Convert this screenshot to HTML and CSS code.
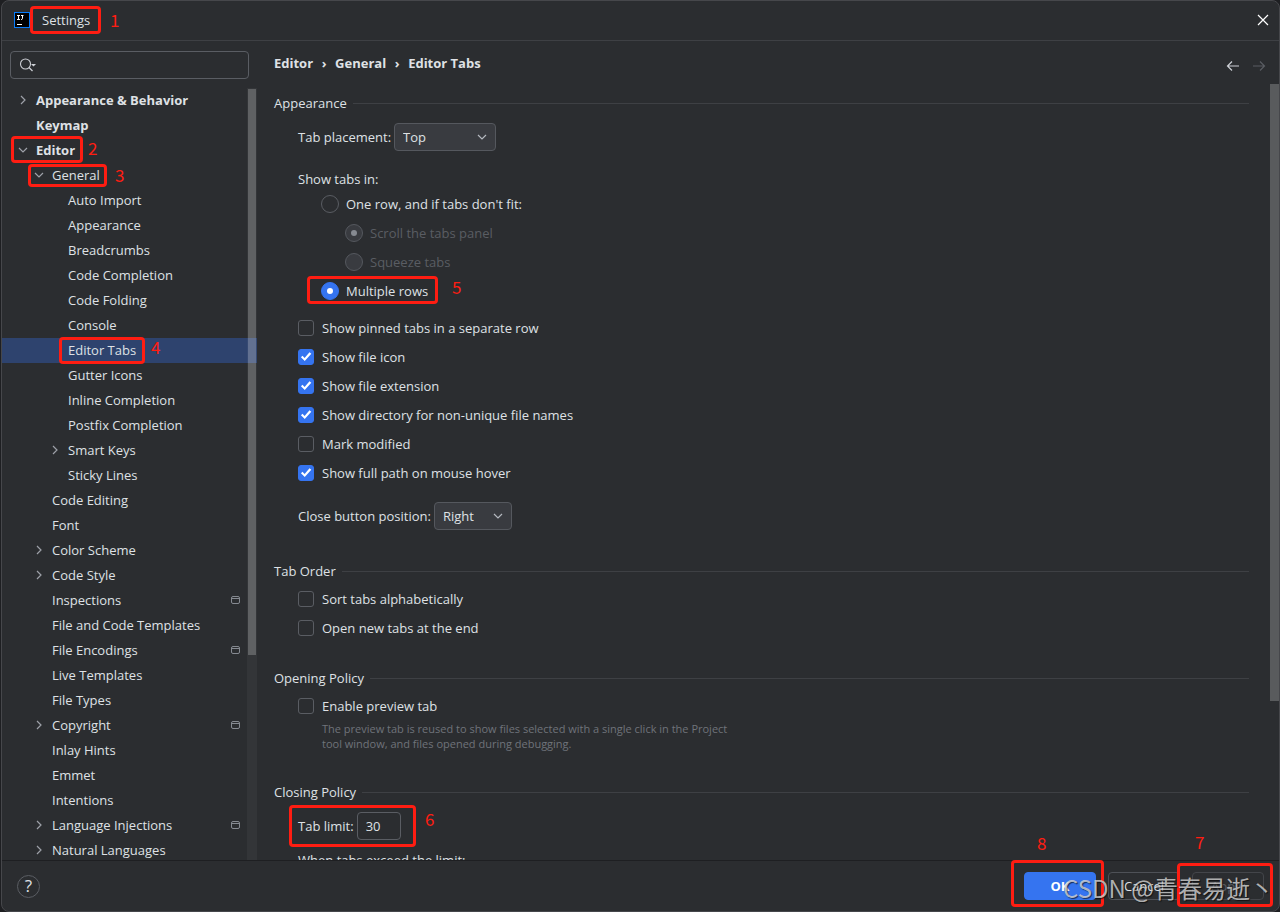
FILE: index.html
```html
<!DOCTYPE html>
<html lang="en">
<head>
  <meta charset="UTF-8">
  <meta name="viewport" content="width=device-width, initial-scale=1.0">
  <title>Settings</title>
  <link rel="stylesheet" href="styles.css">
</head>
<body>
  <!-- shared icons -->
  <svg class="defs" width="0" height="0">
    <symbol id="right" viewBox="0 0 16 16"><path d="M6 4l4 4-4 4" fill="none" stroke="currentColor" stroke-width="1.2"/></symbol>
    <symbol id="down" viewBox="0 0 16 16"><path d="M4 6l4 4 4-4" fill="none" stroke="currentColor" stroke-width="1.2"/></symbol>
    <symbol id="project" viewBox="0 0 16 16"><rect x="4.5" y="4.5" width="8" height="7" rx="1.5" fill="none" stroke="currentColor"/><path d="M4.5 6.5h8" stroke="currentColor"/></symbol>
  </svg>

  <div class="dialog">
    <header class="titlebar">
      <svg class="logo" width="16" height="16" viewBox="0 0 16 16">
        <rect x="0.5" y="0.5" width="15" height="15" fill="#000" stroke="#087cfa"/>
        <path d="M3 3.5h3M4.5 3.5v4M3 7.5h3M7 3.5h2.5M8.5 3.5v3q0 1-1.5 1M3 12.5h5" fill="none" stroke="#fff"/>
      </svg>
      <div class="title">Settings
        <span class="mark mark-title"></span><span class="num num-title">1</span>
      </div>
      <button class="close" aria-label="Close">
        <svg width="12" height="12" viewBox="0 0 12 12"><path d="M1 1l10 10M11 1L1 11" stroke="#fff" stroke-width="1.2"/></svg>
      </button>
    </header>

    <div class="body">
      <aside class="sidebar">
        <div class="search">
          <svg width="20" height="16" viewBox="0 0 20 16">
            <circle cx="6.5" cy="7" r="5" fill="none" stroke="#ced0d6" stroke-width="1.1"/>
            <path d="M10 10.5L13.5 14" stroke="#ced0d6" stroke-width="1.2"/>
            <path d="M12 7h5L14.5 9.5z" fill="#ced0d6"/>
          </svg>
          <input type="text" aria-label="Search settings">
        </div>
        <nav class="tree">
          <ul>
            <li class="top"><svg><use href="#right"/></svg><a href="#">Appearance &amp; Behavior</a></li>
            <li class="top"><a href="#">Keymap</a></li>
            <li class="top"><svg><use href="#down"/></svg><a href="#">Editor</a><span class="mark mark-editor"></span><span class="num num-editor">2</span></li>
            <li class="sub"><svg><use href="#down"/></svg><a href="#">General</a><span class="mark mark-general"></span><span class="num num-general">3</span></li>
            <li class="leaf"><a href="#">Auto Import</a></li>
            <li class="leaf"><a href="#">Appearance</a></li>
            <li class="leaf"><a href="#">Breadcrumbs</a></li>
            <li class="leaf"><a href="#">Code Completion</a></li>
            <li class="leaf"><a href="#">Code Folding</a></li>
            <li class="leaf"><a href="#">Console</a></li>
            <li class="leaf selected"><a href="#">Editor Tabs</a><span class="mark mark-tabs"></span><span class="num num-tabs">4</span></li>
            <li class="leaf"><a href="#">Gutter Icons</a></li>
            <li class="leaf"><a href="#">Inline Completion</a></li>
            <li class="leaf"><a href="#">Postfix Completion</a></li>
            <li class="leaf"><svg><use href="#right"/></svg><a href="#">Smart Keys</a></li>
            <li class="leaf"><a href="#">Sticky Lines</a></li>
            <li class="sub"><a href="#">Code Editing</a></li>
            <li class="sub"><a href="#">Font</a></li>
            <li class="sub"><svg><use href="#right"/></svg><a href="#">Color Scheme</a></li>
            <li class="sub"><svg><use href="#right"/></svg><a href="#">Code Style</a></li>
            <li class="sub"><a href="#">Inspections</a><svg class="project"><use href="#project"/></svg></li>
            <li class="sub"><a href="#">File and Code Templates</a></li>
            <li class="sub"><a href="#">File Encodings</a><svg class="project"><use href="#project"/></svg></li>
            <li class="sub"><a href="#">Live Templates</a></li>
            <li class="sub"><a href="#">File Types</a></li>
            <li class="sub"><svg><use href="#right"/></svg><a href="#">Copyright</a><svg class="project"><use href="#project"/></svg></li>
            <li class="sub"><a href="#">Inlay Hints</a></li>
            <li class="sub"><a href="#">Emmet</a></li>
            <li class="sub"><a href="#">Intentions</a></li>
            <li class="sub"><svg><use href="#right"/></svg><a href="#">Language Injections</a><svg class="project"><use href="#project"/></svg></li>
            <li class="sub"><svg><use href="#right"/></svg><a href="#">Natural Languages</a></li>
          </ul>
          <div class="track"><div class="thumb"></div></div>
        </nav>
      </aside>

      <main class="main">
        <div class="crumbs">
          <a href="#">Editor</a><span>›</span><a href="#">General</a><span>›</span><a href="#">Editor Tabs</a>
          <div class="history">
            <button aria-label="Back"><svg width="14" height="12" viewBox="0 0 14 12"><path d="M13 6H1.5M6 1.5L1.5 6 6 10.5" fill="none" stroke="#ced0d6" stroke-width="1.2"/></svg></button>
            <button aria-label="Forward" disabled><svg width="14" height="12" viewBox="0 0 14 12"><path d="M1 6h11.5M8 1.5L12.5 6 8 10.5" fill="none" stroke="#5a5d63" stroke-width="1.2"/></svg></button>
          </div>
        </div>

        <div class="scroll">
          <form class="form">
            <section>
              <h2>Appearance</h2>
              <div class="field">
                <label for="placement">Tab placement:</label>
                <div class="select placement">
                  <select id="placement"><option>Top</option><option>Bottom</option><option>Left</option><option>Right</option></select>
                  <svg><use href="#down"/></svg>
                </div>
              </div>
              <div class="caption">Show tabs in:</div>
              <div class="rows">
                <label class="row"><input type="radio" name="rows">One row, and if tabs don't fit:</label>
                <div class="nested">
                  <label class="row off"><input type="radio" name="fit" checked disabled>Scroll the tabs panel</label>
                  <label class="row off"><input type="radio" name="fit" disabled>Squeeze tabs</label>
                </div>
                <label class="row"><input type="radio" name="rows" checked>Multiple rows<span class="mark mark-rows"></span><span class="num num-rows">5</span></label>
              </div>
              <div class="checks">
                <label class="row"><input type="checkbox">Show pinned tabs in a separate row</label>
                <label class="row"><input type="checkbox" checked>Show file icon</label>
                <label class="row"><input type="checkbox" checked>Show file extension</label>
                <label class="row"><input type="checkbox" checked>Show directory for non-unique file names</label>
                <label class="row"><input type="checkbox">Mark modified</label>
                <label class="row"><input type="checkbox" checked>Show full path on mouse hover</label>
              </div>
              <div class="field position">
                <label for="position">Close button position:</label>
                <div class="select">
                  <select id="position"><option>Right</option><option>Left</option><option>None</option></select>
                  <svg><use href="#down"/></svg>
                </div>
              </div>
            </section>

            <section class="order">
              <h2>Tab Order</h2>
              <label class="row"><input type="checkbox">Sort tabs alphabetically</label>
              <label class="row"><input type="checkbox">Open new tabs at the end</label>
            </section>

            <section class="opening">
              <h2>Opening Policy</h2>
              <label class="row"><input type="checkbox">Enable preview tab</label>
              <p class="hint">The preview tab is reused to show files selected with a single click in the Project tool window, and files opened during debugging.</p>
            </section>

            <section class="closing">
              <h2>Closing Policy</h2>
              <div class="field">
                <label for="limit">Tab limit:</label>
                <input type="text" id="limit" value="30">
                <span class="mark mark-limit"></span><span class="num num-limit">6</span>
              </div>
              <div class="exceed">When tabs exceed the limit:</div>
            </section>
          </form>
          <div class="thumb"></div>
        </div>
      </main>
    </div>

    <footer class="footer">
      <button class="help" aria-label="Help">?</button>
      <div class="buttons">
        <div class="slot"><button class="btn ok">OK</button><span class="mark mark-ok"></span><span class="num num-ok">8</span></div>
        <div class="slot"><button class="btn">Cancel</button></div>
        <div class="slot"><button class="btn" disabled>Apply</button><span class="mark mark-apply"></span><span class="num num-apply">7</span></div>
      </div>
      <div class="watermark">CSDN @青春易逝丶</div>
    </footer>
  </div>
</body>
</html>
```
FILE: styles.css
```css
*{margin: 0;padding: 0;box-sizing: border-box;}
body{
  background: #1e1f22;
  color: #dfe1e5;
  font: 13px/20px "Open Sans", "Noto Sans CJK SC", sans-serif;
}
a{color: inherit;text-decoration: none;}
ul{list-style: none;}
button, input, select{font: inherit;color: inherit;}
button{background: none;border: none;}
svg{display: block;flex: none;}
.defs{position: absolute;}

.dialog{
  display: flex;
  flex-direction: column;
  height: 100vh;
  margin-left: 1px;
  border: 1px solid #46474b;
  border-radius: 8px;
  background: #2b2d30;
  overflow: hidden;
}

/* title bar */
.titlebar{
  display: flex;
  align-items: center;
  flex: none;
  height: 40px;
  padding: 0 10px 2px 12px;
  border-bottom: 1px solid #3e4044;
}
.title{position: relative;margin-left: 12px;}
.close{margin-left: auto;}

.body{display: flex;flex: 1;min-height: 0;}

/* sidebar */
.sidebar{
  display: flex;
  flex-direction: column;
  flex: none;
  width: 255px;
  padding-top: 10px;
}
.search{
  display: flex;
  align-items: center;
  flex: none;
  height: 28px;
  margin: 0 8px 9px;
  padding-left: 8px;
  border: 1px solid #5a5d63;
  border-radius: 4px;
}
.search input{
  flex: 1;
  min-width: 0;
  border: none;
  outline: none;
  background: none;
}
.tree{position: relative;flex: 1;min-height: 0;overflow: hidden;}
.tree li{
  position: relative;
  display: flex;
  align-items: center;
  height: 25px;
  padding-bottom: 1px;
}
.tree svg{width: 16px;height: 16px;margin: 0 5px 0 -21px;color: #9da0a8;}
.tree .project{margin: 0 14px 0 auto;color: #868a91;}
.top{padding-left: 34px;font-weight: bold;}
.sub{padding-left: 50px;}
.leaf{padding-left: 66px;}
.selected{background: #2e436e;}
.track{
  position: absolute;
  top: 0;
  right: 0;
  bottom: 0;
  width: 10px;
  padding: 1px;
  background: rgba(255, 255, 255, 0.04);
}
.thumb{background: rgba(255, 255, 255, 0.22);}
.track .thumb{height: 73.5%;}

/* right side */
.main{
  display: flex;
  flex-direction: column;
  flex: 1;
  min-width: 0;
}
.crumbs{
  display: flex;
  align-items: center;
  flex: none;
  height: 43px;
  padding: 0 13px 0 17px;
  font-weight: bold;
}
.crumbs span{width: 22px;text-align: center;}
.history{display: flex;gap: 12px;margin-left: auto;padding-top: 6px;}
.scroll{position: relative;flex: 1;min-height: 0;overflow: hidden;}
.scroll > .thumb{
  position: absolute;
  top: 0;
  right: 0;
  width: 9px;
  height: 79.5%;
}
.form{padding: 9px 30px 0 17px;}
h2{
  display: flex;
  align-items: center;
  gap: 6px;
  font-size: 13px;
  font-weight: normal;
}
h2::after{content: "";flex: 1;height: 1px;background: #3e4044;}
.field{
  position: relative;
  display: flex;
  align-items: center;
  gap: 3px;
  width: max-content;
  margin: 10px 0 0 24px;
}
.select{position: relative;width: 78px;}
.placement{width: 102px;}
.select select{
  appearance: none;
  display: block;
  width: 100%;
  height: 28px;
  padding: 0 8px;
  border: 1px solid #55585e;
  border-radius: 4px;
  background: #393b40;
}
.select svg{
  position: absolute;
  top: 6px;
  right: 6px;
  width: 16px;
  height: 16px;
  color: #b4b8bf;
  pointer-events: none;
}
.caption{margin: 18px 0 0 24px;}
.rows{margin-left: 48px;}
.nested{margin-left: 24px;}
.checks{margin: 8px 0 0 24px;}
.position{margin-top: 15px;}
.row{
  position: relative;
  display: flex;
  align-items: center;
  gap: 8px;
  width: max-content;
  height: 29px;
}
.off{color: #5a5d63;}
.row input{
  appearance: none;
  display: grid;
  place-items: center;
  width: 16px;
  height: 16px;
  border: 1px solid #5a5d63;
  border-radius: 3px;
}
.row input[type=radio]{
  width: 18px;
  height: 18px;
  margin: 0 -1px;
  border-radius: 50%;
}
.row input:checked{border-color: #3574f0;background: #3574f0;}
.row input[type=checkbox]:checked::before{
  content: "";
  width: 14px;
  height: 14px;
  background: #fff;
  clip-path: polygon(14% 56%, 25% 45%, 40% 61%, 75% 19%, 88% 30%, 41% 83%);
}
.row input[type=radio]:checked::before{
  content: "";
  width: 6px;
  height: 6px;
  border-radius: 50%;
  background: #fff;
}
.row input:disabled{border-color: #55585e;background: #393b40;}
.row input[type=radio]:disabled::before{background: #868a91;}
.order{margin-top: 31px;}
.opening{margin-top: 26px;}
.closing{margin-top: 31px;}
section > .row{margin-left: 24px;}
h2 + .row{margin-top: 3px;}
.hint{
  max-width: 420px;
  margin: 1px 0 0 48px;
  color: #6f737a;
  font-size: 11px;
  line-height: 15px;
}
#limit{
  width: 44px;
  height: 28px;
  padding: 0 8px;
  border: 1px solid #5a5d63;
  border-radius: 4px;
  background: none;
}
.exceed{margin: 10px 0 0 24px;}

/* bottom bar */
.footer{
  position: relative;
  display: flex;
  align-items: center;
  justify-content: space-between;
  flex: none;
  height: 51px;
  padding: 0 15px;
  border-top: 1px solid #1e1f22;
}
.help{
  width: 23px;
  height: 23px;
  border: 1px solid #5a5d63;
  border-radius: 50%;
  font-size: 17px;
  line-height: 20px;
}
.buttons{display: flex;gap: 12px;}
.slot{position: relative;}
.btn{
  display: block;
  width: 72px;
  height: 28px;
  border: 1px solid #4e5157;
  border-radius: 4px;
}
.btn:disabled{border-color: #43454a;color: #5a5d63;}
.ok{border-color: #3574f0;background: #3574f0;color: #fff;font-weight: bold;}
.watermark{
  position: absolute;
  right: 5px;
  bottom: 6px;
  z-index: 2;
  color: rgba(215, 215, 215, 0.8);
  font: 24px/34px "Noto Sans CJK SC", sans-serif;
  text-shadow: 1px 1px 1px rgba(0, 0, 0, 0.6);
  white-space: nowrap;
  pointer-events: none;
}

/* red step marks laid over the dialog */
.mark, .num{position: absolute;z-index: 1;pointer-events: none;}
.mark{border: 3px solid #ff1d12;border-radius: 4px;}
.num{
  color: #ff1d12;
  font: 17px/20px "Noto Sans CJK SC", sans-serif;
}
.mark-title{left: -12px;top: -4px;width: 71px;height: 28px;}
.num-title{left: 68px;top: 0;}
.mark-editor{left: 9px;top: -2px;width: 72px;height: 27px;}
.num-editor{left: 86px;top: 0;}
.mark-general{left: 26px;top: 1px;width: 79px;height: 23px;}
.num-general{left: 113px;top: 2px;}
.mark-tabs{left: 57px;top: -1px;width: 86px;height: 27px;}
.num-tabs{left: 149px;top: -1px;}
.mark-rows{left: -15px;top: 0;width: 131px;height: 28px;}
.num-rows{left: 130px;top: 1px;}
.mark-limit{left: -9px;top: -7px;width: 127px;height: 42px;}
.num-limit{left: 127px;top: -3px;}
.mark-ok{left: -13px;top: -12px;width: 93px;height: 47px;}
.num-ok{left: 13px;top: -39px;}
.mark-apply{left: -15px;top: -9px;width: 96px;height: 44px;}
.num-apply{left: 3px;top: -40px;}
```
